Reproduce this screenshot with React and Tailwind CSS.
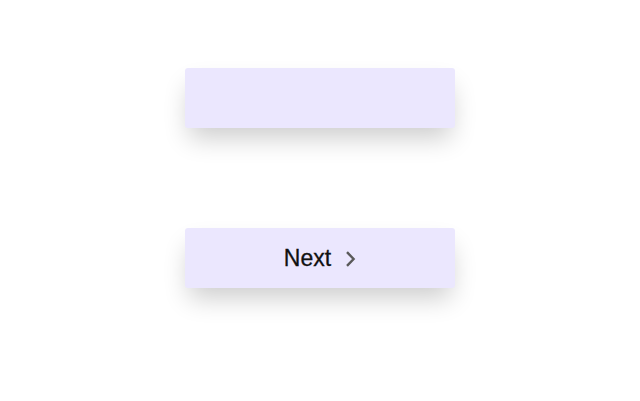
import React from 'react';

const Button = ({ children }) => (
  <button
    className="w-[270px] h-[60px] rounded-[3px] bg-[#ebe7fe] shadow-[0_14px_26px_-4px_rgba(0,0,0,0.2)] flex items-center justify-center gap-[14px] text-[23px] text-[#111] font-['Liberation_Sans',Arial,sans-serif]"
  >
    {children}
  </button>
);

export default function App() {
  return (
    <div className="w-[640px] h-[401px] bg-white flex flex-col items-center pt-[68px] gap-[100px]">
      <Button />
      <Button>
        <span className="[-webkit-text-stroke:0.3px_#111]">Next</span>
        <svg width="11" height="16" viewBox="0 0 11 16" fill="none" className="mt-[1px]">
          <path d="M2 1.2l6.6 6.8-6.6 6.8" stroke="#5a5a5a" strokeWidth="2.4" strokeLinecap="butt" strokeLinejoin="miter" />
        </svg>
      </Button>
    </div>
  );
}
